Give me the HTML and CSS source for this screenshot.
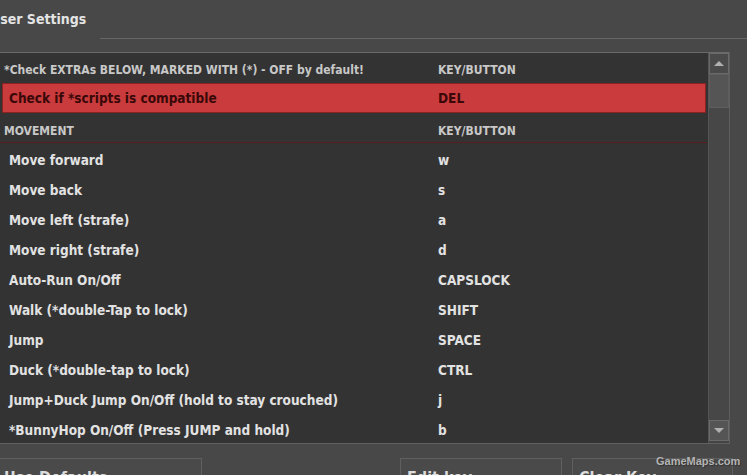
FILE: index.html
```html
<!DOCTYPE html>
<html lang="en">
<head>
    <meta charset="UTF-8">
    <meta name="viewport" content="width=device-width, initial-scale=1.0">
    <title>User Settings</title>
    <link rel="stylesheet" href="styles.css">
</head>
<body>

<div class="header">
    <h1>User Settings</h1>
    <div class="divider"></div>
</div>

<div class="panel">
    <div class="list">
        <div class="row section">
            <span class="name">*Check EXTRAs BELOW, MARKED WITH (*) - OFF by default!</span>
            <span class="key">KEY/BUTTON</span>
        </div>
        <div class="row selected">
            <span class="name">Check if *scripts is compatible</span>
            <span class="key">DEL</span>
        </div>
        <div class="row section underline">
            <span class="name">MOVEMENT</span>
            <span class="key">KEY/BUTTON</span>
        </div>
        <div class="row"><span class="name">Move forward</span><span class="key">w</span></div>
        <div class="row"><span class="name">Move back</span><span class="key">s</span></div>
        <div class="row"><span class="name">Move left (strafe)</span><span class="key">a</span></div>
        <div class="row"><span class="name">Move right (strafe)</span><span class="key">d</span></div>
        <div class="row"><span class="name">Auto-Run On/Off</span><span class="key">CAPSLOCK</span></div>
        <div class="row"><span class="name">Walk (*double-Tap to lock)</span><span class="key">SHIFT</span></div>
        <div class="row"><span class="name">Jump</span><span class="key">SPACE</span></div>
        <div class="row"><span class="name">Duck (*double-tap to lock)</span><span class="key">CTRL</span></div>
        <div class="row"><span class="name">Jump+Duck Jump On/Off (hold to stay crouched)</span><span class="key">j</span></div>
        <div class="row"><span class="name">*BunnyHop On/Off (Press JUMP and hold)</span><span class="key">b</span></div>
    </div>
    <div class="scrollbar">
        <div class="arrow up"></div>
        <div class="thumb"></div>
        <div class="track"></div>
        <div class="arrow down"></div>
    </div>
</div>

<div class="footer">
    <button class="btn defaults">Use Defaults</button>
    <button class="btn edit">Edit key</button>
    <button class="btn clear">Clear Key</button>
</div>

<div class="watermark">GameMaps.com</div>

</body>
</html>
```

FILE: styles.css
```css
html, body {
    margin: 0;
    height: 475px;
    overflow: hidden;
}
body {
    background-color: #484848;
    font-family: "DejaVu Sans", "Liberation Sans", sans-serif;
    font-stretch: condensed;
    font-weight: bold;
    color: #e6e6e6;
    position: relative;
}
.header {
    height: 52px;
    display: flex;
    flex-direction: column;
}
h1 {
    margin: 9px 0 0 -10px;
    font-size: 14px;
    line-height: 20px;
    font-weight: bold;
    color: #e4e4e4;
}
.divider {
    margin: 9px 0 0 100px;
    height: 1px;
    background-color: #666;
}
.panel {
    display: flex;
    height: 390px;
    border-top: 1px solid #6a6a6a;
    border-bottom: 1px solid #606060;
    width: 729px;
    border-right: 1px solid #5e5e5e;
    box-sizing: content-box;
    overflow: hidden;
}
.list {
    flex: 1;
    background-color: #333;
    padding-top: 3px;
    overflow: hidden;
}
.row {
    display: flex;
    align-items: center;
    height: 30px;
    font-size: 13.5px;
    margin-right: 1px;
    color: #e2e2e2;
}
.row .name {
    width: 429px;
    padding-left: 9px;
    white-space: nowrap;
}
.section {
    height: 27px;
    font-size: 12px;
    color: #c8c8c8;
}
.section .name {
    padding-left: 4px;
}
.section .key {
    padding-left: 5px;
}
.underline {
    height: 30px;
    align-items: flex-end;
    padding-bottom: 4px;
    margin-bottom: 2px;
    border-bottom: 1px solid #5a1c1c;
    box-sizing: border-box;
}
.selected {
    background-color: #c93b3c;
    border: 1px solid #8a2222;
    margin-left: 2px;
    margin-right: 2px;
    color: #3a0808;
    font-size: 13.5px;
    box-sizing: border-box;
}
.selected .name {
    padding-left: 6px;
}
.scrollbar {
    width: 20px;
    display: flex;
    flex-direction: column;
    background-color: #444;
    border-left: 1px solid #555;
}
.arrow {
    height: 19px;
    border: 1px solid #6a6a6a;
    background-color: #4a4a4a;
    display: flex;
    align-items: center;
    justify-content: center;
}
.arrow::after {
    content: "";
    border-left: 5px solid transparent;
    border-right: 5px solid transparent;
}
.up::after {
    border-bottom: 5px solid #b0b0b0;
}
.down::after {
    border-top: 5px solid #b0b0b0;
}
.down {
    margin-bottom: 2px;
    background-color: #555;
}
.thumb {
    height: 32px;
    background-color: #555;
    border: 1px solid #5e5e5e;
}
.track {
    flex: 1;
    background-color: #474747;
}
.footer {
    display: flex;
    padding-top: 14px;
}
.btn {
    height: 32px;
    background-color: #4a4a4a;
    border: 1px solid #5f5f5f;
    color: #dcdcdc;
    font-family: inherit;
    font-stretch: condensed;
    font-weight: bold;
    font-size: 16px;
    text-align: left;
    padding: 6px 0 0 4px;
    align-self: flex-start;
}
.defaults {
    width: 203px;
    margin-left: -1px;
}
.edit {
    width: 162px;
    margin-left: 198px;
    padding-left: 6px;
}
.clear {
    width: 161px;
    margin-left: 10px;
    padding-left: 6px;
}
.watermark {
    position: absolute;
    left: 656px;
    top: 455px;
    font-family: "Liberation Sans", sans-serif;
    font-stretch: normal;
    font-weight: bold;
    font-size: 11px;
    color: #b4b4b4;
    text-shadow: 1px 1px 1px #333;
}
```
